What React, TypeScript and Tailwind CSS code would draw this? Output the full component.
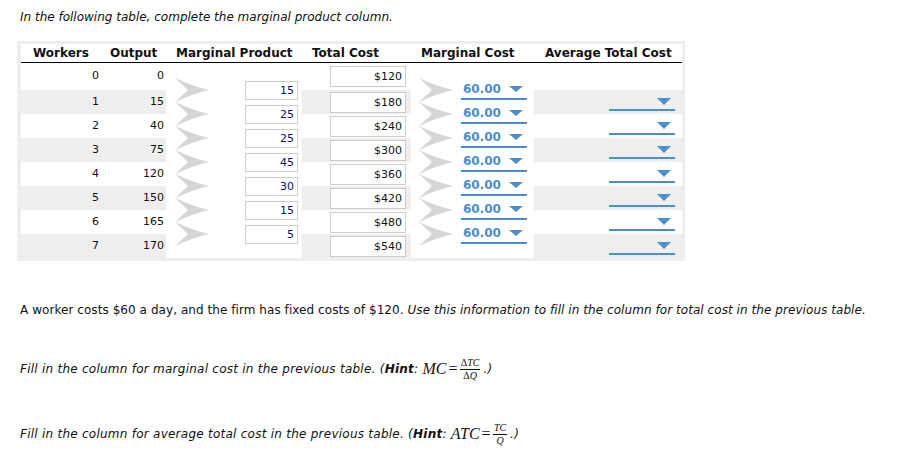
import React from "react";

const workers = [0, 1, 2, 3, 4, 5, 6, 7];
const output = [0, 15, 40, 75, 120, 150, 165, 170];
const totalCost = ["$120", "$180", "$240", "$300", "$360", "$420", "$480", "$540"];
const marginalProduct = [15, 25, 25, 45, 30, 15, 5];

function Arrow() {
  return (
    <svg width="34" height="24" viewBox="0 0 34 24" className="shrink-0">
      <path d="M0 0 Q17 8 34 12 Q17 16 0 24 L13 12 Z" fill="#d6d6d6" />
    </svg>
  );
}

function Caret({ w, h }: { w: number; h: number }) {
  return (
    <svg width={w} height={h} viewBox="0 0 14 7" preserveAspectRatio="none" className="shrink-0">
      <path d="M0 0 H14 L7 7 Z" fill="#4a8fc9" />
    </svg>
  );
}

function rowBg(i: number) {
  return i % 2 === 1 ? "bg-[#eeeeee]" : "bg-white";
}

function rowH(i: number) {
  return i === 0 ? "h-[27px]" : "h-[24px]";
}

export default function App() {
  return (
    <div className="w-[908px] h-[465px] bg-white text-[#111] font-['DejaVu_Sans',Verdana,sans-serif] overflow-hidden">
      <p className="pl-[20px] pt-[9px] text-[12px] leading-[16px] italic">
        In the following table, complete the marginal product column.
      </p>

      <div className="ml-[17px] mt-[16px] w-[668px] bg-[#eeeeee] pt-[3px] pb-[3px] pl-[4px] pr-[3px]">
        <div className="bg-white">
          {/* header */}
          <div className="flex h-[19px] items-center border-b border-black text-[12px] font-bold">
            <div className="w-[83px] pl-[12px]">Workers</div>
            <div className="w-[62px] pl-[6px]">Output</div>
            <div className="w-[136px] pl-[10px]">Marginal Product</div>
            <div className="w-[109px] pl-[10px]">Total Cost</div>
            <div className="w-[123px] pl-[10px]">Marginal Cost</div>
            <div className="w-[148px] pl-[11px]">Average Total Cost</div>
          </div>

          {/* body */}
          <div className="flex text-[11px]">
            <div className="flex w-[145px] flex-col">
              {workers.map((w, i) => (
                <div key={i} className={`flex items-center ${rowH(i)} ${rowBg(i)}`}>
                  <div className="w-[83px] pr-[5px] text-right">{w}</div>
                  <div className="w-[62px] pr-[2px] text-right">{output[i]}</div>
                </div>
              ))}
            </div>

            <div className="flex w-[136px] flex-col bg-white pt-[15px]">
              {marginalProduct.map((v, i) => (
                <div key={i} className="flex h-[24px] items-center">
                  <div className="ml-[9px]">
                    <Arrow />
                  </div>
                  <input
                    readOnly
                    value={v}
                    className="ml-[36px] h-[19px] w-[53px] border border-[#cccccc] bg-white pr-[3px] text-right text-[11px] text-[#10104a] outline-none"
                  />
                </div>
              ))}
            </div>

            <div className="flex w-[109px] flex-col">
              {totalCost.map((c, i) => (
                <div key={i} className={`flex items-center ${rowH(i)} ${rowBg(i)}`}>
                  <input
                    readOnly
                    value={c}
                    className="ml-[28px] h-[21px] w-[76px] border border-[#cccccc] bg-white pr-[3px] text-right text-[11px] text-[#111] outline-none"
                  />
                </div>
              ))}
            </div>

            <div className="flex w-[123px] flex-col bg-white pt-[15px]">
              {marginalProduct.map((_, i) => (
                <div key={i} className="flex h-[24px] items-center">
                  <div className="ml-[8px]">
                    <Arrow />
                  </div>
                  <div className="ml-[8px] flex h-[19px] w-[66px] items-center justify-between border-b-2 border-[#4a8fc9] pl-[2px] pr-[4px] text-[12px] font-bold text-[#4a8fc9]">
                    <span>60.00</span>
                    <Caret w={14} h={6} />
                  </div>
                </div>
              ))}
            </div>

            <div className="flex w-[148px] flex-col">
              {workers.map((_, i) => (
                <div key={i} className={`flex items-start ${rowH(i)} ${rowBg(i)}`}>
                  {i > 0 && (
                    <div className="ml-[75px] flex h-[21px] w-[66px] items-start justify-end border-b-2 border-[#4a8fc9] pr-[4px] pt-[8px]">
                      <Caret w={14} h={7} />
                    </div>
                  )}
                </div>
              ))}
            </div>
          </div>
        </div>
      </div>

      <p className="mt-[41px] pl-[20px] text-[12px] leading-[16px] tracking-[0.06px]">
        A worker costs $60 a day, and the firm has fixed costs of $120.{" "}
        <i>Use this information to fill in the column for total cost in the previous table.</i>
      </p>

      <div className="mt-[36px] flex h-[30px] items-center pl-[20px] text-[12px] italic tracking-[0.25px]">
        <span>Fill in the column for marginal cost in the previous table. (</span>
        <b>Hint</b>
        <span>:&nbsp;</span>
        <span className="font-['Liberation_Serif',serif] text-[16px] tracking-normal">MC</span>
        <span className="font-['Liberation_Serif',serif] not-italic text-[16px] px-[2px]">=</span>
        <span className="inline-flex flex-col items-center font-['Liberation_Serif',serif] text-[10px] leading-[10px] tracking-normal">
          <span className="border-b border-[#111] px-[1px] pb-[1px] not-italic">
            Δ<i>TC</i>
          </span>
          <span className="pt-[1px] not-italic">
            Δ<i>Q</i>
          </span>
        </span>
        <span className="ml-[3px]">.)</span>
      </div>

      <div className="mt-[35px] flex h-[30px] items-center pl-[20px] text-[12px] italic tracking-[0.25px]">
        <span>Fill in the column for average total cost in the previous table. (</span>
        <b>Hint</b>
        <span>:&nbsp;</span>
        <span className="font-['Liberation_Serif',serif] text-[16px] tracking-normal">ATC</span>
        <span className="font-['Liberation_Serif',serif] not-italic text-[16px] px-[2px]">=</span>
        <span className="inline-flex flex-col items-center font-['Liberation_Serif',serif] text-[10px] leading-[10px] tracking-normal">
          <span className="border-b border-[#111] px-[1px] pb-[1px]">TC</span>
          <span className="pt-[1px]">Q</span>
        </span>
        <span className="ml-[3px]">.)</span>
      </div>
    </div>
  );
}
